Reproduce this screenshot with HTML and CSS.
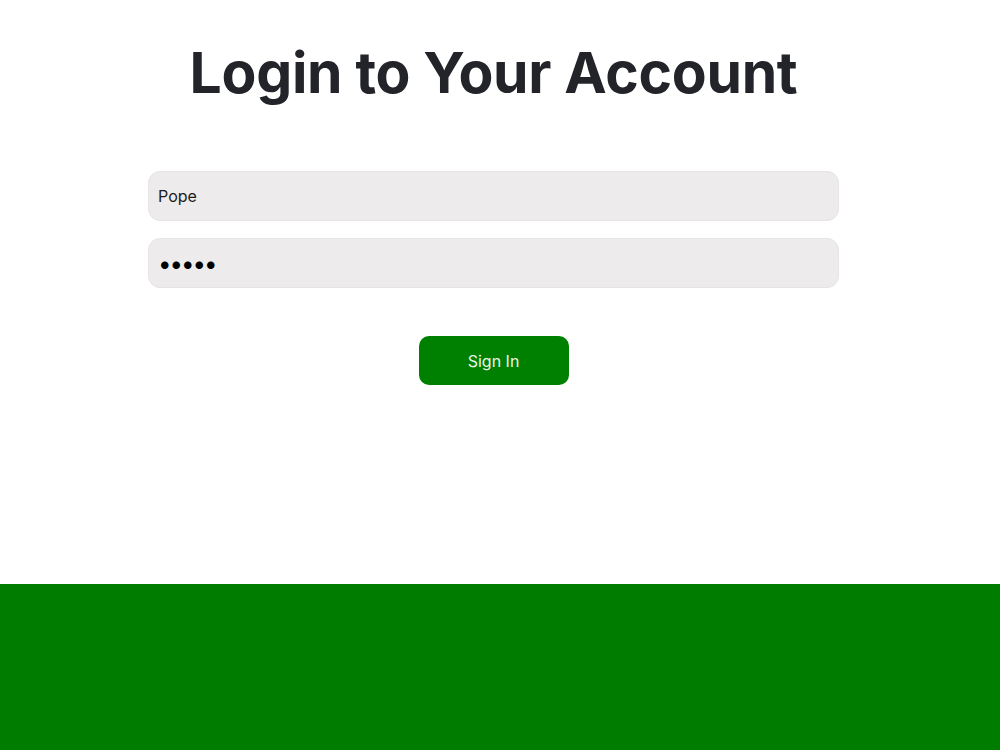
FILE: index.html
```html
<!DOCTYPE html>
<html lang="en">
<head>
    <meta charset="UTF-8">
    <meta name="viewport" content="width=device-width, initial-scale=1.0">
    <title>Login</title>
    <link rel="stylesheet" href="styles.css">
</head>
<body>
    <main class="login">
        <h1>Login to Your Account</h1>
        <form class="login-form">
            <input class="field" type="text" value="Pope">
            <input class="field field-password" type="password" value="12345">
            <button class="btn" type="button">Sign In</button>
        </form>
    </main>
    <footer class="footer"></footer>
</body>
</html>
```

FILE: styles.css
```css
html, body {
    height: 100%;
}
body {
    margin: 0;
    display: flex;
    flex-direction: column;
    font-family: Inter, 'Noto Sans', sans-serif;
    background: #fff;
    color: #22242a;
}
.login {
    flex: 1;
    display: flex;
    flex-direction: column;
    align-items: center;
    padding-right: 13px;
}
h1 {
    margin: 38px 0 0;
    font-size: 57px;
    font-weight: 700;
    line-height: 70px;
    letter-spacing: -0.3px;
    color: #22242a;
}
.login-form {
    width: 691px;
    margin-top: 63px;
    display: flex;
    flex-direction: column;
    align-items: center;
}
.field {
    box-sizing: border-box;
    width: 100%;
    height: 50px;
    margin-bottom: 17px;
    padding: 0 9px;
    border: 1px solid #e6e4e5;
    border-radius: 12px;
    background: #edebec;
    font-family: inherit;
    font-size: 16px;
    color: #1c1c1c;
    outline: none;
}
.field-password {
    font-size: 24px;
    letter-spacing: -2px;
    color: #000;
}
.btn {
    margin-top: 31px;
    width: 150px;
    height: 49px;
    border: none;
    border-radius: 10px;
    background: #008000;
    color: #e8f5e8;
    font-family: inherit;
    font-size: 16px;
    font-weight: 400;
}
.footer {
    height: 166px;
    background: #007c00;
}
```
